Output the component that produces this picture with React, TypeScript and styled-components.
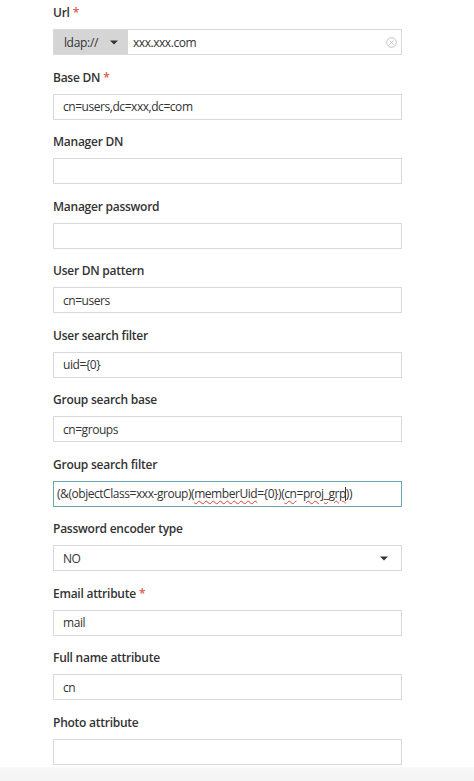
import React from "react";
import styled, { createGlobalStyle } from "styled-components";

const GlobalStyle = createGlobalStyle`
  html, body {
    margin: 0;
    padding: 0;
    background: #ffffff;
  }
  body {
    font-family: "Open Sans", "Liberation Sans", sans-serif;
    color: #333;
  }
`;

interface FieldDef {
  label: string;
  required?: boolean;
  value?: string;
  kind?: "text" | "url" | "select" | "filter";
}

const fields: FieldDef[] = [
  { label: "Url", required: true, kind: "url", value: "xxx.xxx.com" },
  { label: "Base DN", required: true, value: "cn=users,dc=xxx,dc=com" },
  { label: "Manager DN" },
  { label: "Manager password" },
  { label: "User DN pattern", value: "cn=users" },
  { label: "User search filter", value: "uid={0}" },
  { label: "Group search base", value: "cn=groups" },
  { label: "Group search filter", kind: "filter" },
  { label: "Password encoder type", kind: "select", value: "NO" },
  { label: "Email attribute", required: true, value: "mail" },
  { label: "Full name attribute", value: "cn" },
  { label: "Photo attribute" },
];

const Caret = () => (
  <svg width="8" height="5" viewBox="0 0 8 5">
    <path d="M0 0.5h8L4 4.5z" fill="#333" />
  </svg>
);

const ClearIcon = () => (
  <svg width="11" height="11" viewBox="0 0 11 11">
    <circle cx="5.5" cy="5.5" r="4.8" fill="none" stroke="#b5b5b5" strokeWidth="0.8" />
    <path d="M3.7 3.7l3.6 3.6M7.3 3.7l-3.6 3.6" stroke="#b5b5b5" strokeWidth="0.8" />
  </svg>
);

const App: React.FC = () => {
  const renderControl = (f: FieldDef) => {
    if (f.kind === "url") {
      return (
        <UrlBox>
          <Prefix>
            ldap://
            <Caret />
          </Prefix>
          <UrlValue>{f.value}</UrlValue>
          <ClearSlot>
            <ClearIcon />
          </ClearSlot>
        </UrlBox>
      );
    }
    if (f.kind === "select") {
      return (
        <Box>
          <Value>{f.value}</Value>
          <Caret />
        </Box>
      );
    }
    if (f.kind === "filter") {
      return (
        <Box $focused>
          <Value>
            (&amp;(objectClass=xxx-group)(<Misspelled>memberUid</Misspelled>={"{0}"})(
            <Misspelled>cn</Misspelled>=<Misspelled>proj_grp</Misspelled>
            <Cursor />
            ))
          </Value>
        </Box>
      );
    }
    return (
      <Box>
        <Value>{f.value}</Value>
      </Box>
    );
  };

  return (
    <>
      <GlobalStyle />
      <Page>
        <Form>
          {fields.map((f) => (
            <Field key={f.label}>
              <Label>
                {f.label}
                {f.required && <Star>*</Star>}
              </Label>
              {renderControl(f)}
            </Field>
          ))}
        </Form>
        <Footer />
      </Page>
    </>
  );
};

export default App;

const Page = styled.div`
  display: flex;
  flex-direction: column;
  min-height: 781px;
`;

const Form = styled.div`
  display: flex;
  flex-direction: column;
  gap: 14.5px;
  padding: 5px 0 0 53px;
  width: 349px;
`;

const Field = styled.div`
  display: flex;
  flex-direction: column;
  gap: 8px;
`;

const Label = styled.div`
  font-size: 12px;
  font-weight: 600;
  line-height: 16px;
  letter-spacing: -0.25px;
  color: #333;
`;

const Star = styled.span`
  color: #e0554a;
  margin-left: 3px;
`;

const Box = styled.div<{ $focused?: boolean }>`
  box-sizing: border-box;
  height: 26px;
  display: flex;
  align-items: center;
  justify-content: space-between;
  padding: 0 13px 0 ${(p) => (p.$focused ? "3px" : "9px")};
  border: 1px solid ${(p) => (p.$focused ? "#6aa6ae" : "#d9d9d9")};
  background: #fff;
`;

const Value = styled.span`
  font-size: 12px;
  letter-spacing: -0.45px;
  color: #333;
  white-space: nowrap;
  display: flex;
  align-items: center;
`;

const Misspelled = styled.span`
  text-decoration: underline wavy #e04040;
  text-decoration-thickness: 1px;
  text-underline-offset: 2px;
`;

const Cursor = styled.span`
  display: inline-block;
  width: 1px;
  height: 14px;
  background: #333;
  margin-left: -1px;
`;

const UrlBox = styled.div`
  box-sizing: border-box;
  height: 26px;
  display: flex;
  align-items: stretch;
  border: 1px solid #d9d9d9;
`;

const Prefix = styled.div`
  width: 74px;
  background: #d5d5d5;
  display: flex;
  align-items: center;
  justify-content: center;
  gap: 12px;
  font-size: 12px;
  letter-spacing: -0.3px;
  color: #333;
`;

const UrlValue = styled.div`
  flex: 1;
  display: flex;
  align-items: center;
  padding-left: 5px;
  font-size: 12px;
  letter-spacing: -0.45px;
  color: #333;
`;

const ClearSlot = styled.div`
  display: flex;
  align-items: center;
  padding-right: 4px;
`;

const Footer = styled.div`
  margin-top: auto;
  height: 14px;
  background: linear-gradient(#f9f9f9, #f3f3f3);
`;
